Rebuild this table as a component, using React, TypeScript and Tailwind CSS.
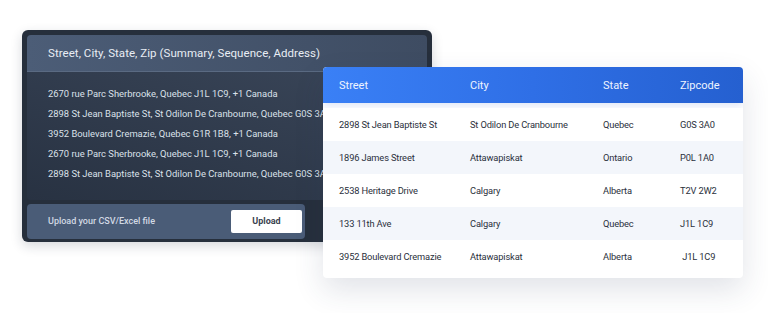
import React from "react";

const addresses = [
  "2670 rue Parc Sherbrooke, Quebec J1L 1C9, +1 Canada",
  "2898 St Jean Baptiste St, St Odilon De Cranbourne, Quebec G0S 3A0, +1 Canada",
  "3952 Boulevard Cremazie, Quebec G1R 1B8, +1 Canada",
  "2670 rue Parc Sherbrooke, Quebec J1L 1C9, +1 Canada",
  "2898 St Jean Baptiste St, St Odilon De Cranbourne, Quebec G0S 3A0, +1 Canada",
];

const rows = [
  ["2898 St Jean Baptiste St", "St Odilon De Cranbourne", "Quebec", "G0S 3A0"],
  ["1896 James Street", "Attawapiskat", "Ontario", "P0L 1A0"],
  ["2538 Heritage Drive", "Calgary", "Alberta", "T2V 2W2"],
  ["133 11th Ave", "Calgary", "Quebec", "J1L 1C9"],
  ["3952 Boulevard Cremazie", "Attawapiskat", "Alberta", "\u00a0J1L 1C9"],
];

export default function App() {
  return (
    <div
      className="w-[768px] h-[313px] bg-white overflow-hidden flex items-start"
      style={{ fontFamily: "Roboto, 'Liberation Sans', sans-serif" }}
    >
      {/* Dark panel */}
      <div className="ml-[22px] mt-[30px] w-[410px] h-[212px] shrink-0 rounded-[6px] bg-[#262f3c] p-[5px] pb-[3px] flex flex-col shadow-[0_4px_12px_rgba(30,40,60,0.18)]">
        <div className="rounded-[4px] overflow-hidden flex flex-col h-[165px]">
          <div className="h-[36px] shrink-0 flex items-center pt-[2px] pl-[21px] bg-gradient-to-r from-[#4c5d77] to-[#3e4c62] text-[11.5px] text-[#e8edf4] tracking-[0.05px] whitespace-nowrap">
            Street, City, State, Zip (Summary, Sequence, Address)
          </div>
          <div className="h-px bg-[#5a6a82] shrink-0" />
          <div className="pt-[12px] pl-[21px] flex flex-col overflow-hidden bg-gradient-to-bl from-[#3a4659] to-[#283242] flex-1">
            {addresses.map((a, i) => (
              <div
                key={i}
                className="h-[20px] leading-[20px] text-[9.4px] text-[#dbe1ea] whitespace-nowrap"
              >
                {a}
              </div>
            ))}
          </div>
        </div>
        <div className="mt-[4px] w-[278px] h-[35px] rounded-[4px] bg-[#4a5c77] flex items-center justify-between pl-[21px] pr-[3px]">
          <span className="text-[9px] font-medium text-[#d2d9e4]">
            Upload your CSV/Excel file
          </span>
          <button className="w-[71px] h-[23px] bg-white rounded-[2px] text-[9px] font-bold text-[#3a4250]">
            Upload
          </button>
        </div>
      </div>

      {/* Table card */}
      <div className="-ml-[109px] mt-[67px] w-[420px] h-[211px] shrink-0 rounded-[4px] bg-white overflow-hidden shadow-[0_12px_30px_rgba(40,60,90,0.14)] flex flex-col">
        <div className="h-[36px] shrink-0 grid grid-cols-[131px_133px_77px_1fr] items-center pt-[2px] pl-[16px] bg-gradient-to-r from-[#3a80f6] via-[#2f6fe6] to-[#2560d0] text-[11px] text-[#eef4ff] shadow-[0_3px_8px_rgba(40,90,200,0.15)]">
          <span>Street</span>
          <span>City</span>
          <span>State</span>
          <span>Zipcode</span>
        </div>
        <div className="h-[5px] shrink-0" />
        {rows.map((r, i) => (
          <div
            key={i}
            className={`h-[33px] shrink-0 grid grid-cols-[131px_133px_77px_1fr] items-center pl-[16px] text-[9.3px] tracking-[-0.15px] text-[#2a303b] whitespace-nowrap ${
              i % 2 === 1 ? "bg-[#f3f6fb]" : "bg-white"
            }`}
          >
            {r.map((c, j) => (
              <span key={j}>{c}</span>
            ))}
          </div>
        ))}
      </div>
    </div>
  );
}
